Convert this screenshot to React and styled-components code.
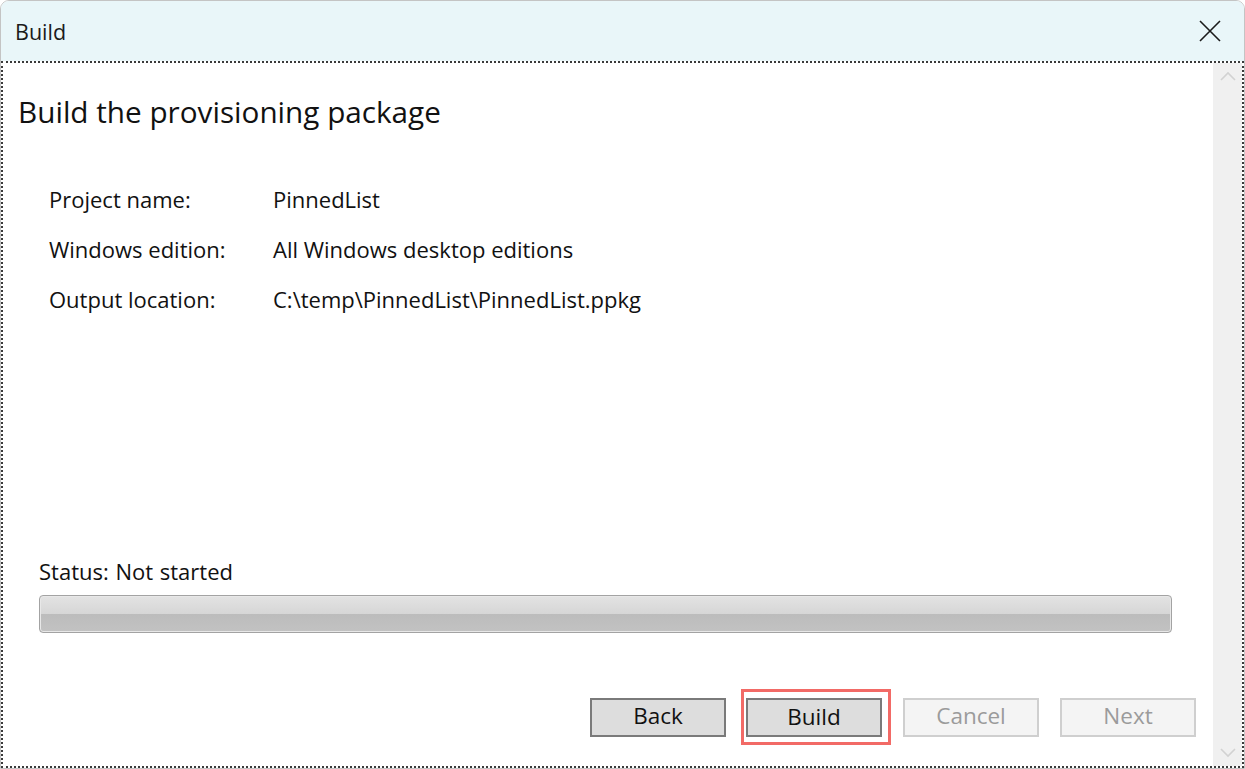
import React from "react";
import styled, { createGlobalStyle } from "styled-components";

const Global = createGlobalStyle`
  html, body { margin: 0; padding: 0; background: #ffffff; }
  body { font-family: "Open Sans", "Noto Sans", sans-serif; color: #111111; }
`;

const Window = styled.div`
  width: 1245px;
  height: 769px;
  box-sizing: border-box;
  display: flex;
  flex-direction: column;
  border: 1px solid #c4c4c4;
  border-radius: 9px 9px 0 0;
  overflow: hidden;
  background: #ffffff;
`;

const TitleBar = styled.div`
  height: 60px;
  flex-shrink: 0;
  display: flex;
  align-items: center;
  justify-content: space-between;
  padding: 0 0 0 14px;
  background: #e9f6f9;
`;

const Title = styled.span`
  font-size: 21.5px;
  color: #1b1b1b;
`;

const CloseButton = styled.button`
  width: 58px;
  height: 60px;
  border: 0;
  background: transparent;
  display: flex;
  align-items: center;
  justify-content: center;
  padding: 0;
  margin-right: 5px;
`;

const Frame = styled.div`
  flex: 1;
  display: flex;
  border: 2px dotted #3a3a3a;
  min-height: 0;
`;

const Content = styled.div`
  flex: 1;
  display: flex;
  flex-direction: column;
  padding: 30px 0 0 15px;
`;

const Heading = styled.h1`
  margin: 0;
  font-size: 29.7px;
  line-height: 38px;
  font-weight: 400;
  color: #111111;
`;

const InfoGrid = styled.div`
  display: grid;
  grid-template-columns: 224px 1fr;
  row-gap: 22px;
  margin: 54px 0 0 31px;
`;

const Label = styled.span`
  font-size: 22px;
  line-height: 28px;
`;

const StatusArea = styled.div`
  margin-top: auto;
  padding: 0 41px 0 21px;
`;

const StatusText = styled.div`
  font-size: 22px;
  line-height: 28px;
  word-spacing: 1px;
`;

const ProgressBar = styled.div`
  margin-top: 10px;
  height: 38px;
  box-sizing: border-box;
  border: 1px solid #a3a3a3;
  border-radius: 4px;
  background: linear-gradient(
    to bottom,
    #e3e3e3 0%,
    #d6d6d6 50%,
    #bcbcbc 50%,
    #c2c2c2 100%
  );
  box-shadow: inset 0 0 0 1px #e8e8e8;
`;

const ButtonRow = styled.div`
  display: flex;
  justify-content: flex-end;
  align-items: center;
  padding: 56px 17px 21px 0;
`;

const Highlight = styled.div`
  padding: 6px 6px 5px 2px;
  border: 3px solid #f26a66;
  margin: 0 12px 0 15px;
  display: flex;
`;

const Button = styled.button`
  width: 136px;
  height: 39px;
  box-sizing: border-box;
  font-family: "Open Sans", "Noto Sans", sans-serif;
  font-size: 22.5px;
  padding: 0 0 3px;
  border: 2px solid ${(p) => (p.disabled ? "#cfcfcf" : "#7a7a7a")};
  background: ${(p) => (p.disabled ? "#f4f4f4" : "#dddddd")};
  color: ${(p) => (p.disabled ? "#9b9b9b" : "#111111")};
  margin-left: ${(p) => p.$gap || 0}px;
`;

const ScrollBar = styled.div`
  width: 29px;
  flex-shrink: 0;
  background: #f0f0f0;
  display: flex;
  flex-direction: column;
  justify-content: space-between;
  align-items: center;
  padding: 8px 0 8px;
`;

const Chevron = ({ up }) => (
  <svg width="16" height="10" viewBox="0 0 16 10">
    <path
      d={up ? "M1 9 L8 2 L15 9" : "M1 1 L8 8 L15 1"}
      fill="none"
      stroke="#d2d2d2"
      strokeWidth="1.6"
    />
  </svg>
);

const rows = [
  ["Project name:", "PinnedList"],
  ["Windows edition:", "All Windows desktop editions"],
  ["Output location:", "C:\\temp\\PinnedList\\PinnedList.ppkg"],
];

export default function App() {
  return (
    <>
      <Global />
      <Window>
        <TitleBar>
          <Title>Build</Title>
          <CloseButton aria-label="Close">
            <svg width="22" height="22" viewBox="0 0 22 22">
              <path
                d="M1 1 L21 21 M21 1 L1 21"
                stroke="#1b1b1b"
                strokeWidth="1.6"
              />
            </svg>
          </CloseButton>
        </TitleBar>
        <Frame>
          <Content>
            <Heading>Build the provisioning package</Heading>
            <InfoGrid>
              {rows.map(([k, v]) => (
                <React.Fragment key={k}>
                  <Label>{k}</Label>
                  <Label>{v}</Label>
                </React.Fragment>
              ))}
            </InfoGrid>
            <StatusArea>
              <StatusText>Status: Not started</StatusText>
              <ProgressBar />
            </StatusArea>
            <ButtonRow>
              <Button>Back</Button>
              <Highlight>
                <Button>Build</Button>
              </Highlight>
              <Button disabled>Cancel</Button>
              <Button disabled $gap={21}>
                Next
              </Button>
            </ButtonRow>
          </Content>
          <ScrollBar>
            <Chevron up />
            <Chevron />
          </ScrollBar>
        </Frame>
      </Window>
    </>
  );
}
